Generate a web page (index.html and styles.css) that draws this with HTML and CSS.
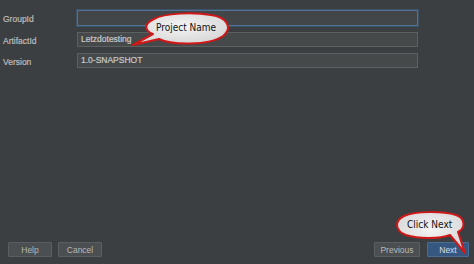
FILE: index.html
```html
<!DOCTYPE html>
<html>
<head>
<meta charset="utf-8">
<link rel="stylesheet" href="styles.css">
</head>
<body>
<div class="dialog">
  <div class="form">
    <label class="label">GroupId</label>
    <div class="field focused"></div>
    <label class="label">ArtifactId</label>
    <div class="field">Letzdotesting</div>
    <label class="label">Version</label>
    <div class="field">1.0-SNAPSHOT</div>
  </div>
  <div class="footer">
    <div class="group">
      <button class="btn">Help</button>
      <button class="btn">Cancel</button>
    </div>
    <div class="group">
      <button class="btn prev">Previous</button>
      <button class="btn primary">Next</button>
    </div>
  </div>
</div>

<div class="callout callout-project">
  <svg width="100" height="36" viewBox="0 0 100 36">
    <defs>
      <radialGradient id="g1" cx="50%" cy="40%" r="60%">
        <stop offset="0%" stop-color="#f4f4f4"/>
        <stop offset="100%" stop-color="#d6d6d6"/>
      </radialGradient>
    </defs>
    <path d="M 22 22 L 2 33 L 28 27 C 40 33 78 34 92 24 C 102 16 96 5 80 3 C 62 0 34 1 23 7 C 12 12 14 19 22 22 Z" fill="url(#g1)" stroke="#d01818" stroke-width="2" stroke-linejoin="round"/>
  </svg>
  <span class="callout-text">Project Name</span>
</div>

<div class="callout callout-next">
  <svg width="76" height="44" viewBox="0 0 76 44">
    <defs>
      <radialGradient id="g2" cx="50%" cy="40%" r="60%">
        <stop offset="0%" stop-color="#f4f4f4"/>
        <stop offset="100%" stop-color="#d6d6d6"/>
      </radialGradient>
    </defs>
    <path d="M 56 24 L 71 42 L 64 21 C 72 17 71 7 62 4 C 48 0 22 0 10 5 C 0 10 1 20 12 24 C 24 28 46 28 56 24 Z" fill="url(#g2)" stroke="#d01818" stroke-width="2" stroke-linejoin="round"/>
  </svg>
  <span class="callout-text">Click Next</span>
</div>
</body>
</html>
```

FILE: styles.css
```css
html, body {
  margin: 0;
  padding: 0;
}
body {
  width: 474px;
  height: 264px;
  background: #3c3f41;
  font-family: "Liberation Sans", Arial, sans-serif;
  overflow: hidden;
  position: relative;
}
.dialog {
  height: 264px;
  box-sizing: border-box;
  display: flex;
  flex-direction: column;
  padding: 10px 5px 7px 3px;
}
.form {
  display: grid;
  grid-template-columns: 74px 341px;
  row-gap: 6px;
}
.label {
  color: #bdbdbd;
  font-size: 8.5px;
  height: 15px;
  display: flex;
  align-items: center;
  padding-top: 2px;
  box-sizing: border-box;
  -webkit-text-stroke: 0.2px #bdbdbd;
}
.field {
  height: 15px;
  box-sizing: border-box;
  background: #45494a;
  border: 1px solid #5c6061;
  color: #cacaca;
  font-size: 8.5px;
  line-height: 13px;
  padding-left: 3px;
  -webkit-text-stroke: 0.2px #cacaca;
}
.field.focused {
  height: 16px;
  border: 1px solid #4f7296;
  box-shadow: 0 0 0 1px #3d5266;
  background: #434648;
}
.footer {
  margin-top: auto;
  display: flex;
  justify-content: space-between;
  align-items: flex-end;
  padding-left: 5px;
}
.group {
  display: flex;
  gap: 6px;
}
.btn {
  height: 15px;
  width: 44px;
  box-sizing: border-box;
  background: #4b4f51;
  border: 1px solid #5a5e60;
  color: #b8b8b8;
  font-family: "Liberation Sans", Arial, sans-serif;
  font-size: 8.5px;
  padding: 0;
  border-radius: 1px;
}
.btn.prev {
  width: 46px;
}
.btn.primary {
  width: 42px;
  margin-left: 1px;
  background: #365880;
  border-color: #4a6c92;
  color: #d6dde6;
}
.callout {
  position: absolute;
}
.callout svg {
  display: block;
}
.callout-text {
  position: absolute;
  font-family: "DejaVu Sans Condensed", "DejaVu Sans", sans-serif;
  font-size: 10px;
  color: #111;
  white-space: nowrap;
}
.callout-project {
  left: 131px;
  top: 12px;
}
.callout-project .callout-text {
  left: 25px;
  top: 10px;
}
.callout-next {
  left: 394px;
  top: 211px;
}
.callout-next .callout-text {
  left: 13px;
  top: 8px;
}
```
